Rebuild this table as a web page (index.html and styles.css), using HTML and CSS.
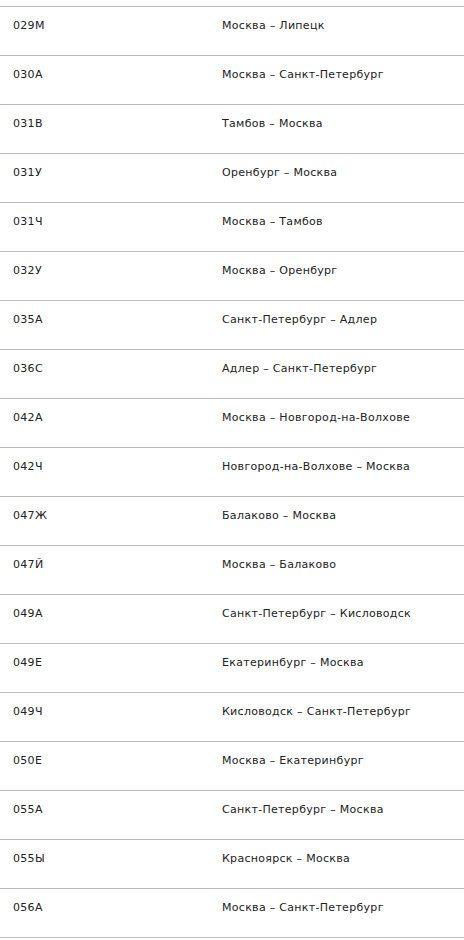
FILE: index.html
```html
<!DOCTYPE html>
<html lang="ru">
<head>
<meta charset="utf-8">
<link rel="stylesheet" href="styles.css">
</head>
<body>
<div class="list">
  <div class="row"><span class="num">029М</span><span class="route">Москва – Липецк</span></div>
  <div class="row"><span class="num">030А</span><span class="route">Москва – Санкт-Петербург</span></div>
  <div class="row"><span class="num">031В</span><span class="route">Тамбов – Москва</span></div>
  <div class="row"><span class="num">031У</span><span class="route">Оренбург – Москва</span></div>
  <div class="row"><span class="num">031Ч</span><span class="route">Москва – Тамбов</span></div>
  <div class="row"><span class="num">032У</span><span class="route">Москва – Оренбург</span></div>
  <div class="row"><span class="num">035А</span><span class="route">Санкт-Петербург – Адлер</span></div>
  <div class="row"><span class="num">036С</span><span class="route">Адлер – Санкт-Петербург</span></div>
  <div class="row"><span class="num">042А</span><span class="route">Москва – Новгород-на-Волхове</span></div>
  <div class="row"><span class="num">042Ч</span><span class="route">Новгород-на-Волхове – Москва</span></div>
  <div class="row"><span class="num">047Ж</span><span class="route">Балаково – Москва</span></div>
  <div class="row"><span class="num">047Й</span><span class="route">Москва – Балаково</span></div>
  <div class="row"><span class="num">049А</span><span class="route">Санкт-Петербург – Кисловодск</span></div>
  <div class="row"><span class="num">049Е</span><span class="route">Екатеринбург – Москва</span></div>
  <div class="row"><span class="num">049Ч</span><span class="route">Кисловодск – Санкт-Петербург</span></div>
  <div class="row"><span class="num">050Е</span><span class="route">Москва – Екатеринбург</span></div>
  <div class="row"><span class="num">055А</span><span class="route">Санкт-Петербург – Москва</span></div>
  <div class="row"><span class="num">055Ы</span><span class="route">Красноярск – Москва</span></div>
  <div class="row"><span class="num">056А</span><span class="route">Москва – Санкт-Петербург</span></div>
</div>
</body>
</html>
```
FILE: styles.css
```css
html, body {
  margin: 0;
  padding: 0;
  background: #fff;
}
body {
  padding-top: 6px;
  font-family: "DejaVu Sans", Verdana, sans-serif;
  font-size: 11px;
  line-height: 13px;
  letter-spacing: 0.3px;
  color: #222;
}
.list {
  border-bottom: 1px solid #bbb;
}
.row {
  display: grid;
  grid-template-columns: 209px 1fr;
  border-top: 1px solid #bbb;
  padding-left: 13px;
  padding-top: 12px;
  height: 36px;
}
```
